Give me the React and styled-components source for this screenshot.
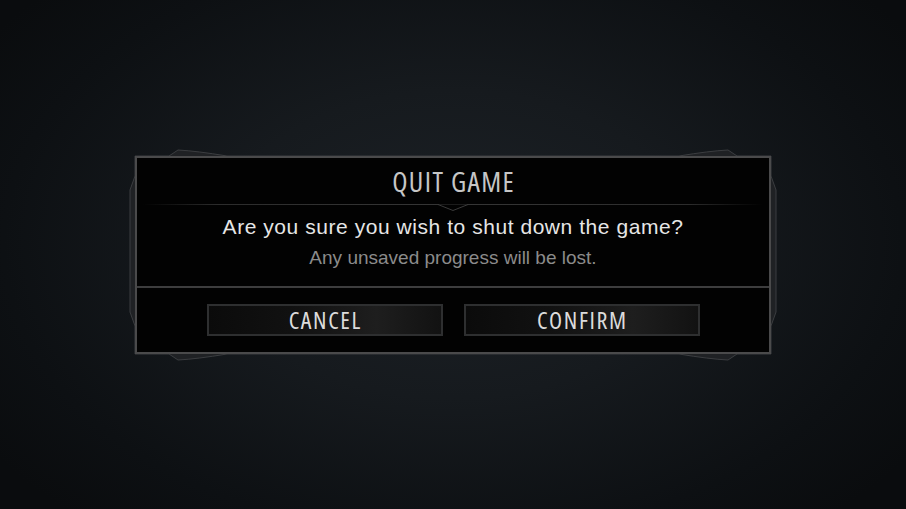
import React from "react";
import styled, { createGlobalStyle } from "styled-components";

const GlobalStyle = createGlobalStyle`
  html, body, #root { margin: 0; padding: 0; width: 100%; height: 100%; }
  body {
    background: #0b0d10;
    font-family: "Liberation Sans", Arial, sans-serif;
    overflow: hidden;
  }
`;

const Screen = styled.div`
  width: 906px;
  height: 509px;
  display: flex;
  align-items: flex-start;
  justify-content: center;
  background: radial-gradient(
    ellipse 62% 72% at 50% 48%,
    #1c2126 0%,
    #161a1e 42%,
    #0d1013 80%,
    #0a0c0e 100%
  );
`;

const Frame = styled.div`
  position: relative;
  margin-top: 156px;
  width: 636px;
`;

const Backing = styled.svg`
  position: absolute;
  left: -8px;
  top: -8px;
  width: 652px;
  height: 214px;
  z-index: 0;
`;

const Dialog = styled.div`
  position: relative;
  z-index: 1;
  box-sizing: border-box;
  width: 636px;
  height: 198px;
  border: 2px solid #4a4a4b;
  background: #020202;
  display: flex;
  flex-direction: column;
`;

const Header = styled.div`
  height: 46px;
  display: flex;
  align-items: center;
  justify-content: center;
`;

const Title = styled.h1`
  margin: 0;
  padding: 1px 0 0 1.4px;
  font-family: "Open Sans", "DejaVu Sans Condensed", sans-serif;
  font-stretch: 75%;
  font-weight: 500;
  font-size: 28px;
  line-height: 45px;
  color: #c6c6c6;
  letter-spacing: 1.4px;
`;

const Divider = styled.div`
  position: relative;
  height: 1px;
  margin: 0 6px;
  background: linear-gradient(
    90deg,
    rgba(60, 60, 60, 0) 0%,
    #2c2c2c 12%,
    #363636 50%,
    #2c2c2c 88%,
    rgba(60, 60, 60, 0) 100%
  );
`;

const Notch = styled.svg`
  position: absolute;
  left: 50%;
  top: 0;
  width: 30px;
  height: 8px;
  margin-left: -15px;
  overflow: visible;
`;

const Body = styled.div`
  flex: 1;
  display: flex;
  flex-direction: column;
  align-items: center;
  padding-top: 10px;
`;

const Message = styled.p`
  margin: 0;
  font-family: "Liberation Sans", Arial, sans-serif;
  font-size: 21px;
  line-height: 24px;
  color: #e6e6e6;
  letter-spacing: 0.55px;
`;

const Note = styled.p`
  margin: 7px 0 0;
  font-family: "Liberation Sans", Arial, sans-serif;
  font-size: 19px;
  line-height: 24px;
  color: #8b8b8b;
`;

const Footer = styled.div`
  border-top: 2px solid #3d3d3e;
  padding: 16px 0;
  display: flex;
  justify-content: center;
  gap: 21px;
`;

const Button = styled.button`
  box-sizing: border-box;
  width: 236px;
  height: 32px;
  padding: 0 0 0 1.6px;
  border: 2px solid #2e2f30;
  background: linear-gradient(
    90deg,
    #0b0b0b 0%,
    #111111 35%,
    #1a1a1a 62%,
    #1e1e1e 72%,
    #121212 100%
  );
  color: #dcdcdc;
  font-family: "Open Sans", "DejaVu Sans Condensed", sans-serif;
  font-stretch: 75%;
  font-weight: 500;
  font-size: 24px;
  line-height: 28px;
  letter-spacing: 1.6px;
  cursor: pointer;
`;

export default function App() {
  return (
    <>
      <GlobalStyle />
      <Screen>
        <Frame>
          <Backing viewBox="0 0 652 214">
            <path
              d="M8 8 L42 8 L51 2 Q70 3 100 8 L552 8 Q582 3 601 2 L610 8 L644 8 L644 28 L649 42 L649 164 L644 178 L644 206 L610 206 L601 212 Q582 211 552 206 L100 206 Q70 211 51 212 L42 206 L8 206 L8 178 L3 164 L3 42 L8 28 Z"
              fill="#1f2124"
              stroke="#3b3d40"
              strokeWidth="1"
            />
          </Backing>
          <Dialog>
            <Header>
              <Title>QUIT GAME</Title>
            </Header>
            <Divider>
              <Notch viewBox="0 0 30 8">
                <path d="M0 0.5 L15 6.5 L30 0.5" fill="#020202" stroke="#3a3a3a" strokeWidth="1" />
              </Notch>
            </Divider>
            <Body>
              <Message>Are you sure you wish to shut down the game?</Message>
              <Note>Any unsaved progress will be lost.</Note>
            </Body>
            <Footer>
              <Button>CANCEL</Button>
              <Button>CONFIRM</Button>
            </Footer>
          </Dialog>
        </Frame>
      </Screen>
    </>
  );
}
